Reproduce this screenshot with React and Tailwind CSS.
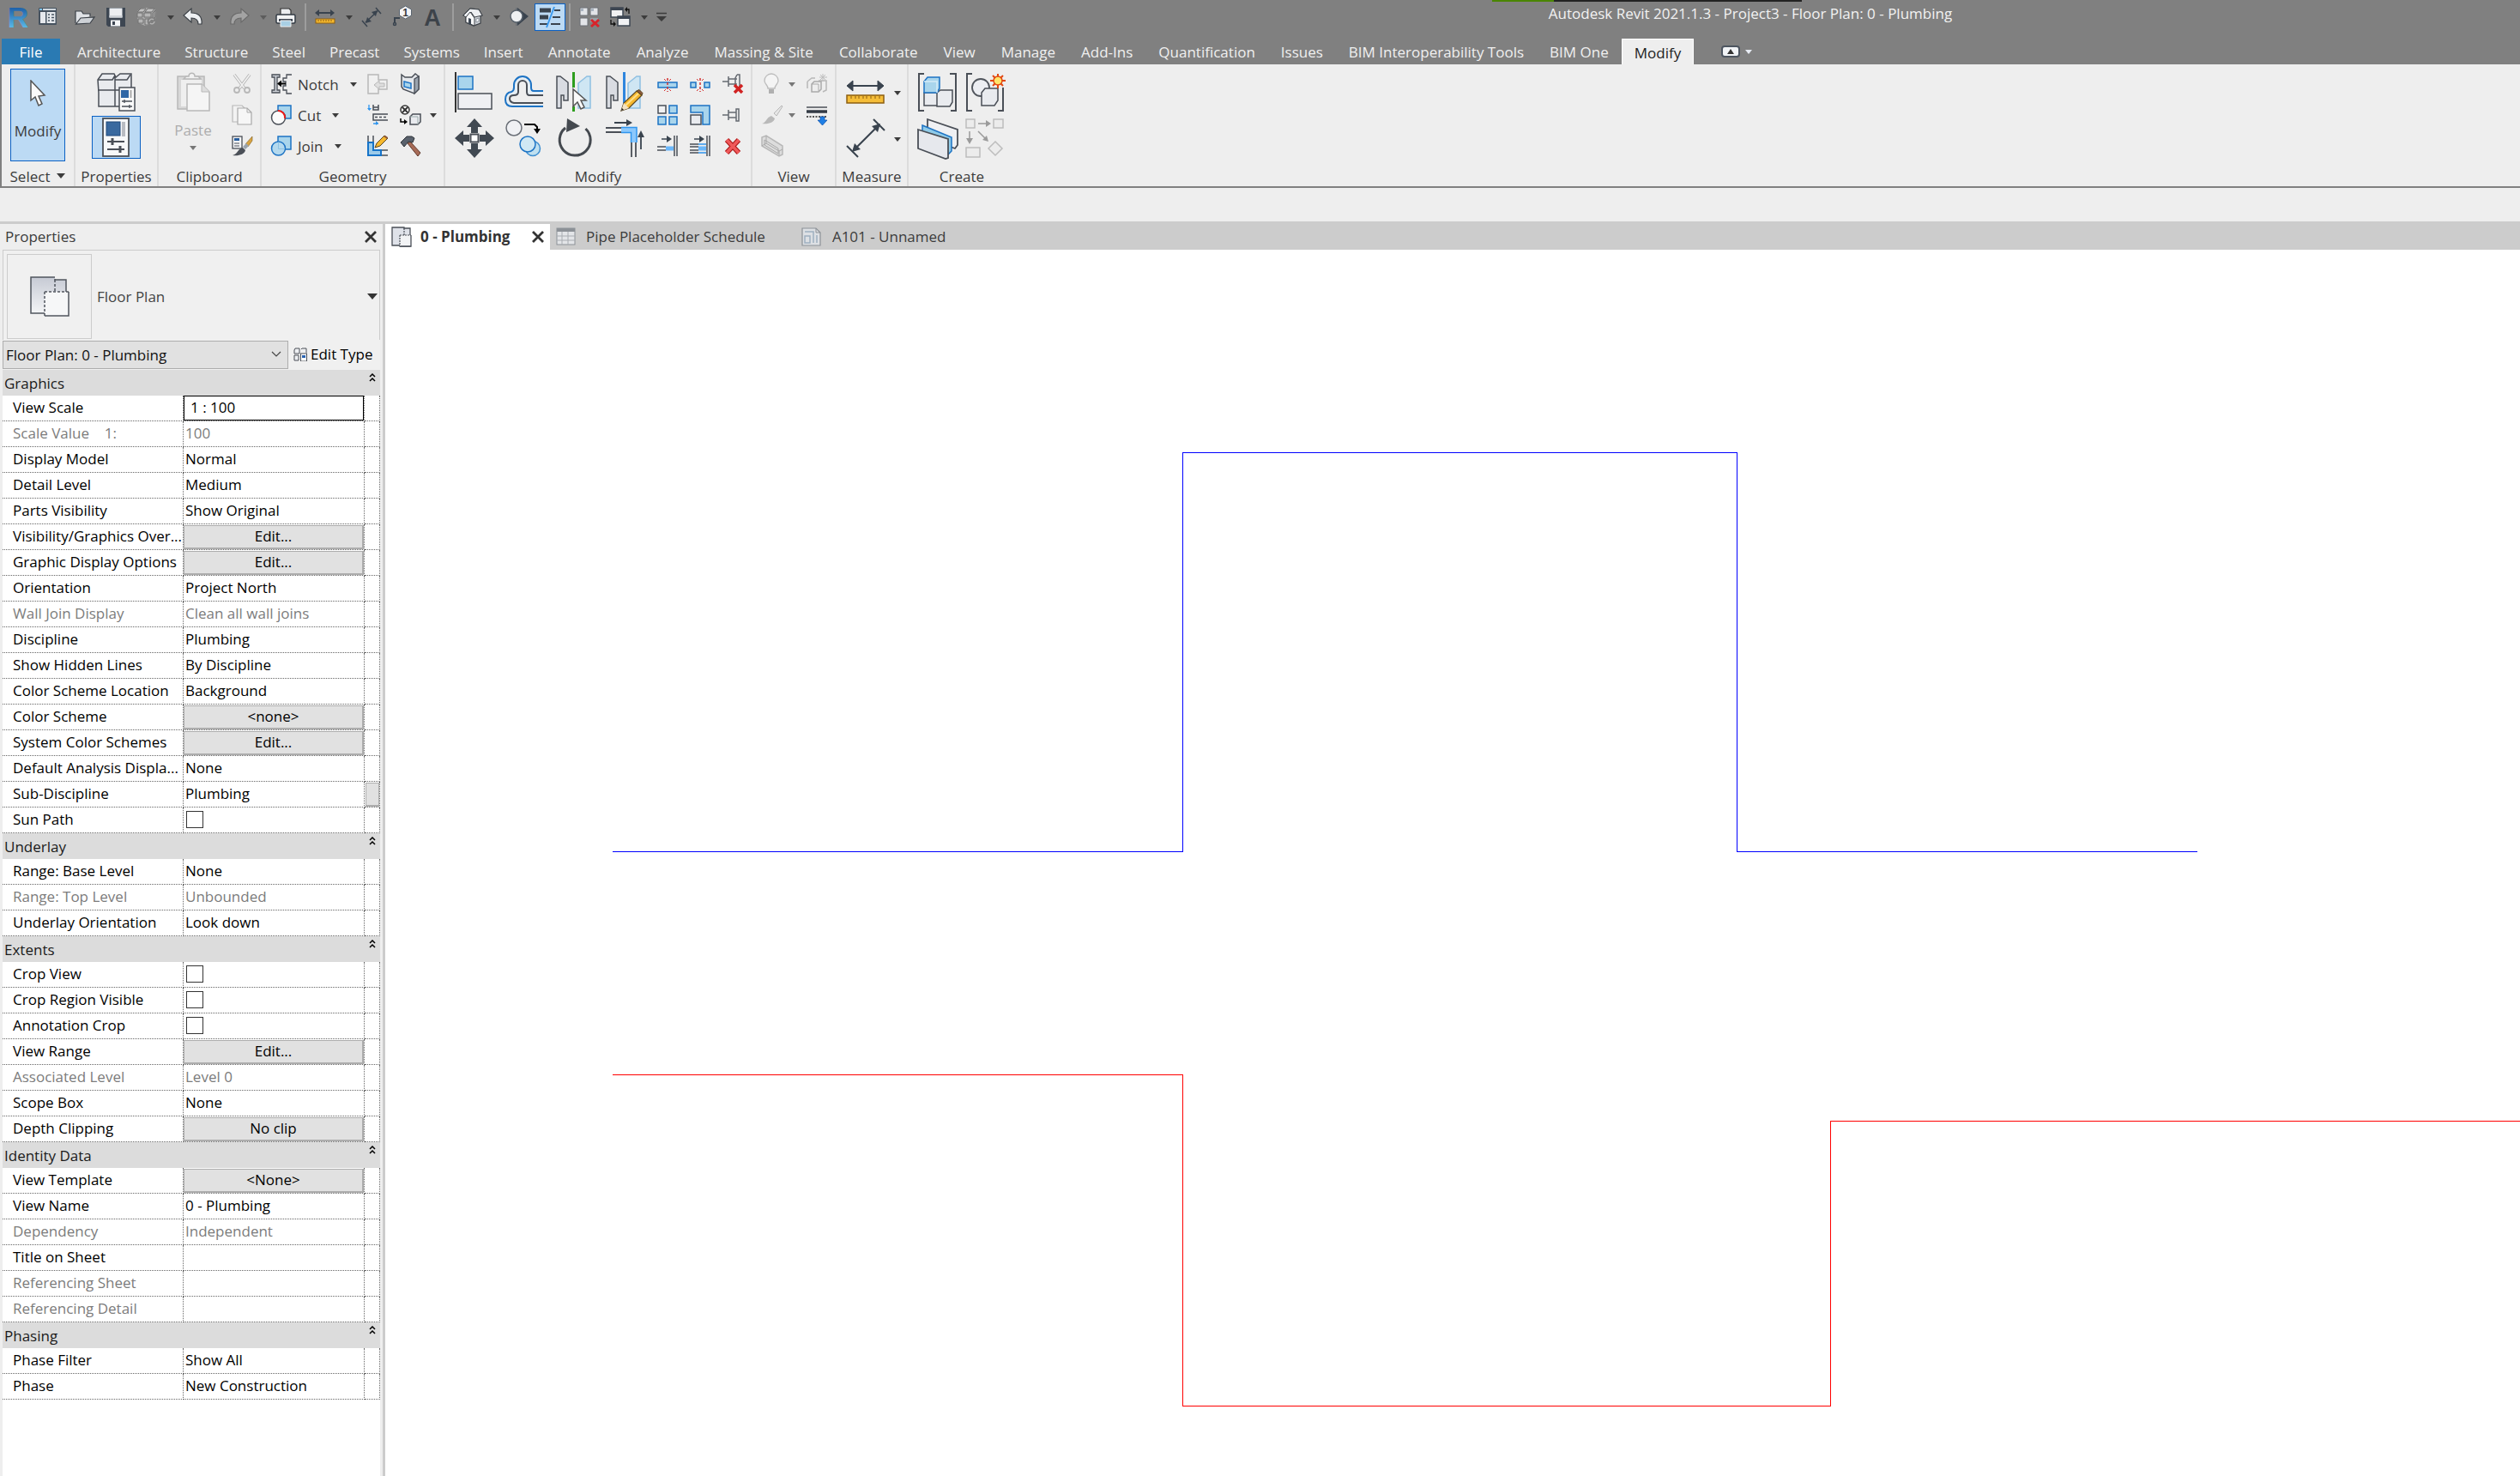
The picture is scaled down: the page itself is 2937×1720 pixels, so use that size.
import React, { useState } from 'react';

const DARK = '#4a4f57';
const BLUE = '#1d73c4';
const SKY = '#a9d5ec';
const PALE = '#e9ebef';
const MUTE = '#b8b8b8';

const S = ({ children, label }) => (
  <svg viewBox="0 0 24 24" className="block h-6 w-6 shrink-0 overflow-visible" fill="none" aria-label={label}>{children}</svg>
);

const L = ({ children }) => (
  <svg viewBox="0 0 48 48" className="block h-12 w-12 shrink-0" fill="none">{children}</svg>
);

const Caret = ({ color = '#3c3c3c' }) => (
  <svg viewBox="0 0 8 5" className="block h-[5px] w-2 shrink-0"><path d="M0 0h8L4 5z" fill={color} /></svg>
);

const Pencil = () => (
  <g>
    <path d="M20 45l3-9 15-14 6 5-15 15z" fill="#f5b82e" stroke="#5a4520" strokeWidth="1.2" />
    <path d="M38 22l3-1.5 4 4-1 2.500z" fill="#8f5a3c" stroke="#5a4520" />
    <path d="M25.500 38.500L40 25" stroke="#fde08a" strokeWidth="2" />
    <path d="M20 45l3-9 6 6z" fill="#f3e3c3" />
    <path d="M20 45l1-3 2 2z" fill="#222" />
  </g>
);

/* quick access icons */
const quick = {
  home: (
    <S>
      <rect x="0" y="1" width="21" height="20" rx="1" fill="#46525f" />
      <path d="M1 2h3v2H1z" fill="#7cc4ee" />
      <path d="M5 2h15v2H5z" fill="#cfd6dc" />
      <rect x="2" y="6" width="6" height="13" fill="#e6e9ed" />
      <rect x="9.500" y="6" width="10" height="13" fill="#e6e9ed" />
      <path d="M11 9h2m2 0h3m-7 3.500h2m2 0h3m-7 3.500h2m2 0h3" stroke="#46525f" strokeWidth="1.500" />
    </S>
  ),
  open: (
    <S>
      <path d="M1 19V5h7l2 3h8v3" fill="#dfe2e6" stroke="#3b4148" strokeWidth="1.200" />
      <path d="M1.500 20L7 13l16-1-5 7z" fill="#cdd1d6" stroke="#3b4148" strokeWidth="1.200" />
    </S>
  ),
  save: (
    <S>
      <path d="M1 1h22v22H3l-2-2z" fill="#3d4652" />
      <rect x="4.500" y="1.500" width="15" height="11" fill="#eceef1" />
      <path d="M4.500 10h15v2.500h-15z" fill="#cfd3d8" />
      <rect x="6" y="15.500" width="11" height="7" fill="#f4f5f7" />
      <rect x="8" y="17" width="3" height="4" fill="#3d4652" />
    </S>
  ),
  sync: (
    <S>
      <path d="M1 5l4-3 7-1 4 1h5l2 4-1 10-5 5-7 1-7-3-2-6z" fill="#a9a9a9" />
      <path d="M1 6l4-4h6L8 6zM10 6l3-4h8l-3 4z" fill="#c2c2c2" stroke="#707070" />
      <path d="M1 7h6v5H1zM9 7h8v5H9zM2 14h6v5H2zM10 14h7v7h-7z" fill="#b5b5b5" stroke="#707070" />
      <path d="M19 7l3-3v8l-3 3z" fill="#9c9c9c" stroke="#707070" />
      <circle cx="18" cy="17" r="5.500" fill="#808080" />
      <path d="M15 17a3 3 0 0 1 5-2m1 2a3 3 0 0 1-5 2" stroke="#b5b5b5" strokeWidth="1.300" />
    </S>
  ),
  undo: (
    <S>
      <path d="M1 10l9-8v5c8 0 13 4 12 13h-4c0-4-2-7-8-7v5z" fill="#eef0f2" stroke="#3c4147" strokeWidth="1.200" />
    </S>
  ),
  redo: (
    <S>
      <path d="M23 10l-9-8v5C6 7 1 11 2 20h4c0-4 2-7 8-7v5z" fill="#a3a3a3" stroke="#6a6a6a" strokeWidth="1.200" />
    </S>
  ),
  print: (
    <S>
      <path d="M6 2h10l2 2v6H6z" fill="#eceef0" stroke="#333" strokeWidth="1.200" />
      <rect x="1" y="9" width="22" height="10" rx="1.500" fill="#f3f4f5" stroke="#333b44" strokeWidth="1.500" />
      <path d="M4 14h16v3H4z" fill="#3d4652" />
      <path d="M6 16h12v7H6z" fill="#a8cfe4" stroke="#eee" />
    </S>
  ),
  measure: (
    <S>
      <path d="M2 7h19" stroke="#39434e" strokeWidth="2" />
      <path d="M0 7l5-4v8zM23 7l-5-4v8z" fill="#39434e" />
      <rect x="1" y="14" width="22" height="5" fill="#f5b92f" stroke="#8d5f10" />
      <path d="M4 15v2m3-2v2m3-2v2m3-2v2m3-2v2m3-2v2" stroke="#8d5f10" />
    </S>
  ),
  dimension: (
    <S>
      <path d="M1 16l6 7M17 1l6 7M5 18L19 5" stroke="#39434e" strokeWidth="1.500" />
      <path d="M5 19l2-7 5 5zM19 4l-7 2 5 5z" fill="#39434e" />
    </S>
  ),
  tag: (
    <S>
      <path d="M3 20v-7h6" stroke="#39434e" strokeWidth="2" />
      <circle cx="3" cy="20" r="1.500" fill="#808080" stroke="#39434e" strokeWidth="1.500" />
      <path d="M15.500 -1l7 4v7l-7 4-7-4v-7z" fill="#f4f5f7" stroke="#5b6570" />
      <text x="15.500" y="11" textAnchor="middle" fontSize="12" fontWeight="700" fill="#3b3b3b" fontFamily="Liberation Sans">1</text>
    </S>
  ),
  text: (
    <S>
      <text x="11" y="22" textAnchor="middle" fontSize="27" fontWeight="700" fill="#3d434a" fontFamily="Liberation Sans">A</text>
    </S>
  ),
  house: (
    <S>
      <path d="M1 10L9 2l10 1 4 7-2 1v8l-8 3-9-4v-7z" fill="#cfd3d9" stroke="#3c4147" strokeWidth="1.200" />
      <path d="M1 10L9 2l10 1 4 7-9 2-4-6-6 6z" fill="#eceef1" stroke="#3c4147" />
      <path d="M4 12l5-6 5 7v9l-10-4z" fill="#f8f9fa" stroke="#3c4147" />
      <path d="M7 13l3 1v7l-3-1z" fill="#3d4652" />
      <path d="M16 14l3-1v4l-3 1z" fill="#f4f6f8" stroke="#6b747e" strokeWidth=".7" />
    </S>
  ),
  section: (
    <S>
      <path d="M10 1l13 10-13 11z" fill="#39434e" />
      <circle cx="9" cy="11" r="7" fill="#eef0f2" stroke="#59626c" strokeWidth="1.500" />
      <path d="M9 4v-3m0 17v4" stroke="#59626c" />
    </S>
  ),
  thin: (
    <S>
      <path d="M0 4h13M0 12h10" stroke="#39434e" strokeWidth="5" />
      <path d="M0 20h9M17 4h7M15 12h9M13 20h11" stroke="#39434e" strokeWidth="2" />
      <path d="M17 0L8 24" stroke="#3a9af0" strokeWidth="2" />
    </S>
  ),
  closeViews: (
    <S>
      <path d="M1 1h9v9H1zM13 1h9v9h-9zM1 13h9v9H1z" fill="#e2e4e8" stroke="#6b6f75" />
      <path d="M2 2h3v3H2zM14 2h3v3h-3z" fill="#aab4c0" />
      <path d="M13 13h9v5h-9z" fill="#9aa0a6" />
      <path d="M14 15l9 8m0-8l-9 8" stroke="#d8232a" strokeWidth="3" />
    </S>
  ),
  switchViews: (
    <S>
      <rect x="1" y="1" width="14" height="11" fill="#f0f1f3" stroke="#3d4652" strokeWidth="1.500" />
      <path d="M1 2.500h14" stroke="#3d4652" strokeWidth="3" />
      <rect x="9" y="11" width="14" height="11" fill="#f0f1f3" stroke="#3d4652" strokeWidth="1.500" />
      <path d="M9 12.500h14" stroke="#3d4652" strokeWidth="3" />
      <path d="M18 3h4v5M1 15v5h5" stroke="#111" strokeWidth="1.300" />
      <path d="M20 0v6l-3-3zM4 17v6l3-3z" fill="#111" />
    </S>
  ),
};

/* small ribbon icons, 24px */
const Scissors = () => (
  <S>
    <path d="M3 1l12 16M21 1L9 17" stroke={MUTE} strokeWidth="3.500" />
    <path d="M3 1l12 16M21 1L9 17" stroke="#f4f4f4" strokeWidth="1.500" />
    <circle cx="6" cy="19" r="3" stroke={MUTE} strokeWidth="1.800" />
    <circle cx="18" cy="19" r="3" stroke={MUTE} strokeWidth="1.800" />
  </S>
);
const CopyClip = () => (
  <S>
    <path d="M1 1h11l3 3v16H1z" fill="#f2f2f2" stroke={MUTE} strokeWidth="1.200" />
    <path d="M7 4h11l5 5v14H7z" fill="#f6f6f6" stroke="#a8a8a8" strokeWidth="1.200" />
    <path d="M18 4v5h5" stroke="#a8a8a8" />
  </S>
);
const MatchType = () => (
  <S>
    <rect x="1" y="1" width="11" height="14" fill="#f4f5f7" stroke={DARK} strokeWidth="1.300" />
    <rect x="3" y="3" width="6" height="3" fill="#2a5f9e" />
    <path d="M3 9h6M3 12h6" stroke={DARK} />
    <path d="M24 1l-8 9 3 3 5-7z" fill="#d9a441" stroke="#7a5a20" strokeWidth=".6" />
    <path d="M17 9l3 3-4 4-3-3z" fill="#9aa3ad" />
    <path d="M1 23c6-1 6-8 12-9l3 3c-1 5-8 7-15 6z" fill="#4b5058" />
  </S>
);
const NotchIcon = () => (
  <S>
    <path d="M1 1h9v3H7v15h3v3H1v-3h3V4H1z" fill="#cfd3d9" stroke={DARK} strokeWidth="1.300" />
    <path d="M24 1h-6v4h-4v4h3v5h-3v5h4v4h6" stroke={DARK} strokeWidth="1.300" />
    <path d="M10 11.500h7" stroke="#000" strokeWidth="2" />
    <path d="M7 11.500l5-4v8z" fill="#000" />
  </S>
);
const CutIcon = () => (
  <S>
    <rect x="8" y="1" width="15" height="15" fill={SKY} stroke={BLUE} strokeWidth="1.500" />
    <circle cx="8.500" cy="15" r="8" fill="#fbfbfb" stroke={DARK} strokeWidth="1.500" />
    <path d="M8 7a8 8 0 0 1 8 9" stroke="#f01818" strokeWidth="2" />
  </S>
);
const JoinIcon = () => (
  <S>
    <rect x="8" y="1" width="15" height="15" fill={SKY} stroke={BLUE} strokeWidth="1.500" />
    <circle cx="8.500" cy="15" r="8" fill="#b4d9ee" stroke={BLUE} strokeWidth="1.500" />
    <path d="M8.500 7.500V15.500H16" stroke="#8fc3e4" />
  </S>
);
const Coping = () => (
  <S>
    <path d="M1 1h12v6h10v11H13v5H1z" fill="#f0f0f0" stroke={MUTE} strokeWidth="1.500" />
    <path d="M8 13l6-5v3h6v4h-6v3z" fill="#dedede" stroke={MUTE} />
  </S>
);
const BeamJoin = () => (
  <S>
    <path d="M2 0v6M7 22h6" stroke="#2f95ee" strokeWidth="1.300" />
    <path d="M0 4h5L2.500 7zM10 19v5l3-2.500z" fill="#2f95ee" />
    <path d="M7 0v6h6V0M7 3h6" stroke={DARK} strokeWidth="1.500" />
    <path d="M24 11H7v7h17" stroke={DARK} strokeWidth="1.500" />
    <path d="M9 14.500h15" stroke={DARK} strokeWidth="1.500" strokeDasharray="3 2" />
  </S>
);
const WallJoin = () => (
  <S>
    <path d="M1 0v23M7 0v8M24 17h-7M24 23H1" stroke={DARK} strokeWidth="1.500" />
    <path d="M1 8h6v9h9v6H1z" fill="#9ccbe9" stroke="#1673c8" strokeWidth="2" />
    <path d="M9 14l2-5 9-9 4 3-9 9z" fill="#f5b82e" stroke="#5a4520" />
    <path d="M19 1l2-1 3 2-1 2z" fill="#8f5a3c" />
  </S>
);
const SplitFace = () => (
  <S>
    <path d="M2 1l4 3h8l4-4 4 3v15l-5 5-13-5-2-3z" fill="#e5e8ec" stroke={DARK} strokeWidth="1.500" />
    <path d="M17 6l5-3v15l-5 5z" fill="#9aa3ae" stroke={DARK} strokeWidth="1.300" />
    <path d="M5 9l8 2v6l-8-2z" fill={SKY} stroke={BLUE} strokeWidth="1.500" />
  </S>
);
const Paint = () => (
  <S>
    <circle cx="6" cy="6" r="5" fill="#fff" stroke="#333" strokeWidth="1.500" />
    <path d="M3 3l6 6M9 3L3 9" stroke="#333" strokeWidth="2" />
    <path d="M1 16v4h5" stroke="#000" strokeWidth="1.500" />
    <path d="M5 17v6l4-3z" fill="#000" />
    <path d="M12 14l3-3h9v9l-3 3h-9z" fill={PALE} stroke={DARK} strokeWidth="1.500" />
    <path d="M12 14h9v9" stroke="#9aa" />
  </S>
);
const Hammer = () => (
  <S>
    <path d="M9 9l3-2 12 13-3 4z" fill="#a76b57" stroke="#61382b" />
    <path d="M1 8l7-7h6l3 2-2 5-5-1-5 6z" fill="#59616c" stroke="#2d3238" />
  </S>
);

const SplitEl = ({ gap }) => (
  <S>
    {gap ? (
      <>
        <rect x="1" y="10" width="6" height="6" fill={SKY} stroke={BLUE} strokeWidth="1.500" />
        <rect x="17" y="10" width="6" height="6" fill={SKY} stroke={BLUE} strokeWidth="1.500" />
      </>
    ) : (
      <rect x="1" y="10" width="22" height="6" fill={SKY} stroke={BLUE} strokeWidth="1.500" />
    )}
    <path d="M8 6l2 2m6-2l-2 2m-6 12l2-2m6 2l-2-2" stroke="#d23030" />
    <path d="M12 5v16" stroke="#d23030" strokeWidth="1.500" strokeDasharray="3 2" />
  </S>
);
const Unpin = ({ red }) => (
  <S>
    <path d="M0 9h7M7 3v12M7 6h10M7 12h10M17 1l-2 4v8l2 4M17 1h3v16h-3" stroke="#666b72" strokeWidth="1.500" />
    {red && <path d="M14 13l9 9m0-9l-9 9" stroke="#d12222" strokeWidth="3.500" />}
  </S>
);
const PinIcon = () => (
  <S>
    <path d="M0 12h7M7 6v12M7 9h9M7 15h9M19 5h-3v14h3z" stroke="#666b72" strokeWidth="1.500" />
  </S>
);
const ArrayIcon = () => (
  <S>
    <rect x="1" y="1" width="9" height="9" fill="#f1f2f4" stroke={DARK} strokeWidth="1.500" />
    <path d="M14 1h9v9h-9zM1 14h9v9H1zM14 14h9v9h-9z" fill={SKY} stroke={BLUE} strokeWidth="1.500" />
  </S>
);
const ScaleIcon = () => (
  <S>
    <path d="M1 1h22v22h-8V9H1z" fill={SKY} stroke={BLUE} strokeWidth="1.500" />
    <rect x="1" y="12" width="12" height="11" fill={PALE} stroke={DARK} strokeWidth="1.500" />
  </S>
);
const TrimOne = ({ multi }) => (
  <S>
    <path d="M20 0v24M23 0v24" stroke={DARK} strokeWidth="1.500" />
    <path d="M5 4h8" stroke="#39434e" strokeWidth="1.500" />
    <path d="M11 0l6 4-6 4z" fill="#39434e" />
    <path d="M0 13h10M0 17h10" stroke={DARK} strokeWidth="1.500" />
    <path d="M10 15h9" stroke="#6ab7fb" strokeWidth="5" />
    {multi && <path d="M0 10h10M0 20h10" stroke={DARK} strokeWidth="1.500" />}
    {multi && <path d="M10 10h9m-9 10h9" stroke="#2f95ee" strokeWidth="1.500" />}
  </S>
);
const Delete = () => (
  <S>
    <path d="M5 5l14 15M19 5L5 20" stroke="#b01c1c" strokeWidth="6" />
    <path d="M5 5l14 15M19 5L5 20" stroke="#f0595a" strokeWidth="3.500" />
  </S>
);

const Bulb = () => (
  <S>
    <path d="M7 17c0-4-4-5-4-9a8 8 0 0 1 16 0c0 4-4 5-4 9z" fill="#f4f4f4" stroke="#bcbcbc" strokeWidth="1.300" />
    <path d="M8 18h6v5H8z" fill="#b0b0b0" />
  </S>
);
const Displace = () => (
  <S>
    <path d="M1 9l5-4h4M1 9v8M14 8h9v11l-4 2" stroke={MUTE} strokeWidth="1.500" />
    <path d="M6 12l3-3h8v9l-3 3H6z" fill="#eee" stroke="#aaa" strokeWidth="1.500" />
    <path d="M6 12h8v8" stroke="#aaa" />
    <path d="M19 0v9M15 4h9M16 1l6 6m0-6l-6 6" stroke="#bdbdbd" />
  </S>
);
const Brush = () => (
  <S>
    <path d="M23 1l-9 9 3 3 7-11z" fill="#e6e6e6" stroke={MUTE} />
    <path d="M0 22c5-1 5-7 11-9l4 3c-1 5-8 7-15 6z" fill="#b9b9b9" />
  </S>
);
const LineWork = () => (
  <S>
    <path d="M0 3h24" stroke={DARK} strokeWidth="1.500" />
    <path d="M0 8h24" stroke="#333a44" strokeWidth="3.500" />
    <path d="M0 14h24" stroke="#222" strokeWidth="1.500" strokeDasharray="2 1.500" />
    <path d="M16 14h5v4h3l-5.500 6-5.500-6h3z" fill="#1f7fe6" stroke="#0d4fa6" strokeWidth=".7" />
  </S>
);
const SectionBox = () => (
  <S>
    <path d="M0 2l5-2 19 12v10l-4 2L0 12z" fill="#ddd" stroke={MUTE} strokeWidth="1.500" />
    <path d="M5 0v9l15 9v5M0 12l5-3M20 18l4-2M3 5l16 10v6L3 11z" stroke="#a9a9a9" />
  </S>
);

/* large ribbon icons, 48px */
const Align = () => (
  <L>
    <path d="M1 0v47" stroke="#333" strokeWidth="2" />
    <rect x="4" y="5" width="17" height="15" fill={SKY} stroke={BLUE} strokeWidth="1.500" />
    <rect x="4" y="25" width="39" height="18" fill="#eff0f3" stroke={DARK} strokeWidth="1.500" />
  </L>
);
const Offset = () => (
  <L>
    <path d="M45 22H34Q31 22 31 18V15A10 10 0 0 0 11 15V18Q11 22 8 23Q1 24 1 32T9 40H45" stroke={BLUE} strokeWidth="2" fill="#e6eef4" />
    <path d="M45 27H29Q26 27 26 23V15A5 5 0 0 0 16 15V23Q16 27 11 27Q6 27 6 31T11 36H45" stroke={DARK} strokeWidth="2" fill="#eee" />
  </L>
);
const MirrorShapes = () => (
  <>
    <path d="M3 5h4l9 7v21h-5v-6H8v15H3z" fill="#d9dce2" stroke={DARK} strokeWidth="1.500" />
    <path d="M42 5h-4l-10 8v29h14z" fill="#cfe6f3" stroke="#8fc0e2" strokeWidth="1.500" />
  </>
);
const MirrorPick = () => (
  <L>
    <MirrorShapes />
    <path d="M22.500 0v18m0 22v6" stroke="#2e9e1e" strokeWidth="3" />
    <path d="M22 20v20l5-5 4 8 4-2-4-8h6z" fill="#fafafa" stroke="#555" strokeWidth="1.500" />
  </L>
);
const MirrorDraw = () => (
  <L>
    <MirrorShapes />
    <path d="M23.500 0v44" stroke="#2f86de" strokeWidth="3" />
    <Pencil />
  </L>
);
const Move = () => (
  <L>
    <path d="M23 0l9 10h-5v7h-8v-7h-5zM23 46l9-10h-5v-7h-8v7h-5zM0 23l10-9v5h7v8h-7v5zM46 23l-10-9v5h-7v8h7v5z" fill="#414952" />
    <rect x="18.500" y="18.500" width="9" height="9" fill="#fff" stroke={DARK} strokeWidth="2" />
  </L>
);
const CopyBig = () => (
  <L>
    <circle cx="11" cy="11" r="9" fill="#f0f1f4" stroke="#6a6f77" strokeWidth="1.500" />
    <path d="M23 7h12l3 3v5" stroke="#000" strokeWidth="2" />
    <path d="M34 12h8l-4 6z" fill="#000" />
    <circle cx="33" cy="35" r="8.500" fill="#bfe0f0" stroke="#3f8fd0" strokeWidth="1.500" />
    <circle cx="27" cy="30" r="9" fill="#cfe8f4" stroke={BLUE} strokeWidth="1.500" />
  </L>
);
const Rotate = () => (
  <L>
    <path d="M13 11a18 18 0 1 0 23.500 1" stroke="#44494f" strokeWidth="3" />
    <path d="M15 0l15 9-16 7z" fill="#44494f" />
  </L>
);
const Trim = () => (
  <L>
    <path d="M2 11h19M2 16h19M32 28v17M37 28v17" stroke={DARK} strokeWidth="1.800" />
    <path d="M20 13.500h14.500V28" stroke="#8cc8fc" strokeWidth="7" />
    <path d="M20 10.500h18V28M20 16.500h11.500V28" stroke="#2f95ee" strokeWidth="1.500" />
    <path d="M12 5h16M43 36V20" stroke="#39434e" strokeWidth="1.800" />
    <path d="M26 1l7 4-7 4zM39 22l4-8 4 8z" fill="#39434e" />
  </L>
);
const MeasureBig = () => (
  <L>
    <path d="M3 16h39" stroke="#39434e" strokeWidth="2" />
    <path d="M1 16l7-6v12zM44 16l-7-6v12z" fill="#39434e" stroke="#39434e" />
    <rect x="1" y="27" width="43" height="9" fill="#f5bd38" stroke="#8d5f10" strokeWidth="1.500" />
    <path d="M6 28v3m5-3v3m4-3v3m5-3v3m4-3v3m5-3v3m5-3v3m5-3v3" stroke="#8d5f10" />
  </L>
);
const DimBig = () => (
  <L>
    <path d="M1 32l13 13M32 1l13 13M9 37L38 8" stroke="#39434e" strokeWidth="2" />
    <path d="M7 39l3-10 7 7zM40 6l-10 3 7 7z" fill="#39434e" />
  </L>
);
const Cubes = () => (
  <L>
    <path d="M8 2H2v43h6M38 2h7v43h-6" stroke={DARK} strokeWidth="2" />
    <path d="M8 24h15v15H8zM23 24l4-3h14v14l-3 5H23z" fill={PALE} stroke={DARK} strokeWidth="1.500" />
    <path d="M8 11l4-5h14v13l-3 5H8z" fill={SKY} stroke={BLUE} strokeWidth="1.500" />
    <path d="M8 11h15v13" stroke="#d5ecf7" strokeWidth="1.500" />
  </L>
);
const GroupBig = () => (
  <L>
    <path d="M8 2H2v43h6M44 18v27h-6" stroke={DARK} strokeWidth="2" />
    <circle cx="18" cy="18" r="10" fill="#eceef2" stroke="#50555c" strokeWidth="1.800" />
    <path d="M19 24l4-5h15v14l-4 6H19z" fill={PALE} stroke={DARK} strokeWidth="1.500" />
    <path d="M38 2v17M29 10h18M32 4l12 12m0-12L32 16" stroke="#e2470f" strokeWidth="2" />
    <circle cx="38" cy="10" r="5" fill="#ffe46a" stroke="#e2470f" strokeWidth="1.500" />
  </L>
);
const Assembly = () => (
  <L>
    <path d="M12 1l35 12v18l-3 4-32-12z" fill="#eff0f3" stroke={DARK} strokeWidth="1.800" />
    <path d="M6 8l34 14v16l-4 4L6 28z" fill="#8fcbe9" stroke={BLUE} strokeWidth="1.500" />
    <path d="M1 13l35 11v22l-3 1L1 35z" fill="#e6e8ed" stroke={DARK} strokeWidth="1.800" />
  </L>
);
const Similar = () => (
  <L>
    <path d="M1 1h10v10H1zM33 1h11v10H33zM1 34h16v11H1zM35 27l8 8-8 8-8-8z" fill="#ececec" stroke="#bdbdbd" strokeWidth="1.500" />
    <path d="M15 6h13M5 15v11M15 15l9 9" stroke="#9b9b9b" strokeWidth="1.500" />
    <path d="M24 2l6 4-6 4zM1 23h8l-4 7zM27 27l-7-2 5-5z" fill="#9b9b9b" />
  </L>
);
const TypeProps = () => (
  <L>
    <path d="M1 9l5-7h14l2 4 5-4h13v17l-5 4v12l-5 5H2V24z" fill="#e9ebef" stroke={DARK} strokeWidth="1.500" />
    <path d="M1 21h34M21 6v34M1 9h17l3-5M21 9h14l4-6" stroke={DARK} strokeWidth="1.500" />
    <rect x="26" y="18" width="18" height="27" fill="#fafafa" stroke={DARK} strokeWidth="1.500" />
    <rect x="28" y="21" width="9" height="9" fill="#2f66a5" />
    <path d="M39.500 21v9" stroke="#aaa" strokeWidth="2" />
    <path d="M29 34h12M29 40h12M32 32v4M38 38v4" stroke={DARK} strokeWidth="1.300" />
  </L>
);
const Props = () => (
  <L>
    <rect x="9" y="2" width="30" height="44" fill="#f7f8f9" stroke={DARK} strokeWidth="1.800" />
    <rect x="13" y="6" width="16" height="16" fill="#39699f" stroke="#214b7d" />
    <path d="M33 6v17" stroke="#b9bcc2" strokeWidth="4" />
    <path d="M14 29h20M14 38h20" stroke={DARK} strokeWidth="2" />
    <path d="M20 25v8M29 34v8" stroke={DARK} strokeWidth="3" />
  </L>
);
const PasteBig = () => (
  <svg viewBox="0 0 40 48" className="block h-12 w-10" fill="none">
    <path d="M2 5h31v38H2z" fill="#d8d8d8" stroke={MUTE} strokeWidth="1.500" />
    <path d="M6 9h24v31H6z" fill="#efefef" />
    <path d="M9 8l3-3h3c0-5 7-5 7 0h4l3 3z" fill="#f2f2f2" stroke={MUTE} strokeWidth="1.500" />
    <path d="M13 14h17l9 9v22H13z" fill="#f5f5f5" stroke={MUTE} strokeWidth="1.500" />
    <path d="M30 14v9h9" fill="#ddd" stroke={MUTE} />
  </svg>
);

const PlanIcon = () => (
  <svg viewBox="0 0 24 24" className="mr-2.5 h-6 w-6" fill="none">
    <path d="M1 1h14v1h7v21H10v-1H1z" fill="#dfe2e9" stroke={DARK} strokeWidth="1.300" />
    <path d="M10 22V10h13v13H10z" fill="#f2f3f5" />
    <path d="M15 2v8m-5 0h13M10 10v12" stroke={DARK} strokeWidth="1.200" strokeDasharray="2 1" />
    <path d="M23 10v13H10" stroke={DARK} strokeWidth="1.300" />
  </svg>
);

const PlanBig = () => (
  <L>
    <defs>
      <linearGradient id="plan" x1="0" y1="0" x2="0" y2="1">
        <stop offset="0" stopColor="#c6cad4" />
        <stop offset="1" stopColor="#f7f8f9" />
      </linearGradient>
    </defs>
    <path d="M2 1h28v3h13v42H18v-3H2z" fill="url(#plan)" />
    <path d="M30 3v1h13v14M18 43H2V1h28" stroke="#50555d" strokeWidth="1.500" />
    <path d="M18 18h28v28H18z" fill="#f6f7f8" />
    <path d="M30 4v14M18 18h28M18 18v28" stroke="#50555d" strokeWidth="1.500" strokeDasharray="3 2" />
    <path d="M46 18v28H18" stroke="#50555d" strokeWidth="1.500" />
  </L>
);

const Cross = () => (
  <svg viewBox="0 0 14 14" className="h-[14px] w-[14px]"><path d="M1 1l12 12M13 1L1 13" stroke="#333" strokeWidth="2.800" /></svg>
);

const Sep = () => <div className="-mx-0.5 h-8 w-0.5 bg-[#9d9d9d]" />;

const Q = ({ icon, label, className = '' }) => (
  <button aria-label={label} className={`shrink-0 ${className}`}>{icon}</button>
);

const QCaret = ({ color }) => (
  <button aria-label="More" className="w-1.5 shrink-0"><Caret color={color} /></button>
);

const coreTabs = ['Architecture', 'Structure', 'Steel', 'Precast', 'Systems', 'Insert'];

const moreTabs = [
  'Annotate', 'Analyze', 'Massing & Site', 'Collaborate', 'View', 'Manage', 'Add-Ins',
  'Quantification', 'Issues', 'BIM Interoperability Tools', 'BIM One',
];

const TitleBar = () => (
  <header className="relative flex h-[45px] items-start bg-[#808080]">
    <div className="flex h-10 items-center gap-3 pl-[9px]">
      <button aria-label="Revit" className="shrink-0">
        <svg viewBox="0 0 24 30" className="h-[30px] w-6 overflow-visible">
          <defs>
            <linearGradient id="logo" x1="0" y1="0" x2="0" y2="1">
              <stop offset="0.2" stopColor="#1d5fa8" />
              <stop offset="0.9" stopColor="#62c3ee" />
            </linearGradient>
          </defs>
          <text x="12" y="27" textAnchor="middle" fontSize="34" fontWeight="700" fill="url(#logo)" fontFamily="Liberation Sans">R</text>
        </svg>
      </button>
      <Q icon={quick.home} label="Home" className="mr-1.5" />
      <Q icon={quick.open} label="Open" />
      <Q icon={quick.save} label="Save" />
      <Q icon={quick.sync} label="Synchronize" />
      <QCaret />
      <Q icon={quick.undo} label="Undo" />
      <QCaret />
      <Q icon={quick.redo} label="Redo" />
      <QCaret color="#5c5c5c" />
      <Q icon={quick.print} label="Print" />
      <Sep />
      <Q icon={quick.measure} label="Measure" />
      <QCaret />
      <Q icon={quick.dimension} label="Aligned dimension" />
      <Q icon={quick.tag} label="Tag by category" />
      <Q icon={quick.text} label="Text" />
      <Sep />
      <Q icon={quick.house} label="Default 3D view" />
      <QCaret />
      <Q icon={quick.section} label="Section" />
      <Q icon={quick.thin} label="Thin lines" className="-mx-1.5 border border-[#0b61c4] bg-[#bcdaf4] px-[5px] py-[3px]" />
      <Sep />
      <Q icon={quick.closeViews} label="Close inactive views" />
      <Q icon={quick.switchViews} label="Switch windows" />
      <QCaret />
      <button aria-label="Customize toolbar">
        <svg viewBox="0 0 12 12" className="h-3 w-3"><path d="M0 1.500h12" stroke="#3c3c3c" strokeWidth="1.500" /><path d="M0 5h12l-6 6z" fill="#3c3c3c" /></svg>
      </button>
    </div>
    <h1 className="flex-1 pl-[366px] text-center text-[17px] leading-8 text-[#f2f2f2]">
      Autodesk Revit 2021.1.3 - Project3 - Floor Plan: 0 - Plumbing
    </h1>
    <div className="absolute top-0 left-[1739px] flex h-0.5">
      <div className="w-[72px] bg-[#4a8500]" />
      <div className="w-[289px] bg-[#222]" />
    </div>
  </header>
);

const MenuTabs = () => (
  <nav className="flex h-[30px] items-stretch bg-[#808080] pl-0.5 text-[17px] leading-8 whitespace-nowrap text-[#f0f0f0]">
    <button className="mr-1.5 w-[68px] bg-[#2a7ab3] text-white">File</button>
    {coreTabs.map(tab => (
      <button key={tab} className="px-[14px]">{tab}</button>
    ))}
    {moreTabs.map(tab => (
      <button key={tab} className="px-[15px]">{tab}</button>
    ))}
    <button className="border border-b-0 border-white bg-[#eee] px-[14px] text-[#222]">Modify</button>
    <button aria-label="Minimize ribbon" className="ml-8 flex items-center gap-1.5">
      <svg viewBox="0 0 22 14" className="h-[14px] w-[22px]">
        <rect x="1" y="1" width="20" height="12" rx="3" fill="#f1f3f6" stroke="#4d5560" strokeWidth="2" />
        <path d="M7 10l4-6 4 6z" fill="#333" />
      </svg>
      <Caret color="#e8ecf4" />
    </button>
  </nav>
);

const Panel = ({ title, children, className = '', last, caret }) => (
  <section className={`flex flex-col ${last ? '' : 'border-r-2 border-[#dcdcdc]'}`}>
    <div className={`flex h-[117px] items-start ${className}`}>{children}</div>
    <h2 className="flex h-[25px] items-center justify-center gap-2 text-[17px] leading-6 text-[#3c3c3c]">
      <span className="pt-0.5">{title}</span>
      {caret && <svg viewBox="0 0 10 6" className="h-1.5 w-2.5"><path d="M0 0h10L5 6z" fill="#3c3c3c" /></svg>}
    </h2>
  </section>
);

const Col = ({ children, className = '' }) => (
  <div className={`flex flex-col gap-3 pt-[11px] ${className}`}>
    {React.Children.map(children, child => <button className="flex items-center">{child}</button>)}
  </div>
);

const BigCol = ({ children }) => (
  <div className="flex flex-col gap-1.5 pt-[9px]">
    {React.Children.map(children, child => <button className="block">{child}</button>)}
  </div>
);

const TextTool = ({ icon, children }) => (
  <button className="flex h-6 items-center gap-[7px]">
    {icon}
    <span className="mr-1.5 pt-0.5">{children}</span>
    <Caret />
  </button>
);

const Ribbon = () => (
  <div className="flex border-b-2 border-l-2 border-[#808080] bg-[#eee] text-[17px] text-[#3c3c3c]">
    <Panel title="Select" caret className="px-2.5">
      <button className="mt-[5px] flex h-[108px] w-16 flex-col items-center border border-[#0b61c4] bg-[#bcdaf4] pt-3">
        <svg viewBox="0 0 20 32" className="h-8 w-5">
          <path d="M2 1v23l5-4 4 10 4-2-4-9 7-1z" fill="#fafafa" stroke="#555" strokeWidth="1.500" />
        </svg>
        <span className="mt-4 leading-6">Modify</span>
      </button>
    </Panel>
    <Panel title="Properties" className="flex-col px-[19px]">
      <button aria-label="Type properties" className="mt-[9px] ml-1.5"><TypeProps /></button>
      <button aria-label="Properties" className="mt-[3px] w-[57px] border border-[#0b61c4] bg-[#bcdaf4] px-[3px]"><Props /></button>
    </Panel>
    <Panel title="Clipboard" className="gap-[25px] pr-[9px] pl-5">
      <button className="flex w-10 flex-col items-center pt-[9px] text-[#adadad]">
        <PasteBig />
        <span className="mt-2 mb-1.5 leading-6">Paste</span>
        <Caret color="#777" />
      </button>
      <Col><Scissors /><CopyClip /><MatchType /></Col>
    </Panel>
    <Panel title="Geometry" className="gap-[14px] pr-2 pl-[11px]">
      <div className="flex w-[98px] flex-col gap-3 pt-[11px] leading-6">
        <TextTool icon={<NotchIcon />}>Notch</TextTool>
        <TextTool icon={<CutIcon />}>Cut</TextTool>
        <TextTool icon={<JoinIcon />}>Join</TextTool>
      </div>
      <Col><Coping /><BeamJoin /><WallJoin /></Col>
      <Col className="w-[43px]">
        <SplitFace />
        <span className="flex items-center gap-[11px]"><Paint /><Caret /></span>
        <Hammer />
      </Col>
    </Panel>
    <Panel title="Modify" className="gap-[14px] pr-[9px] pl-[11px]">
      <div className="flex gap-2.5">
        <BigCol><Align /><Move /></BigCol>
        <BigCol><Offset /><CopyBig /></BigCol>
        <BigCol><MirrorPick /><Rotate /></BigCol>
        <BigCol><MirrorDraw /><Trim /></BigCol>
      </div>
      <Col><SplitEl /><ArrayIcon /><TrimOne /></Col>
      <Col><SplitEl gap /><ScaleIcon /><TrimOne multi /></Col>
      <Col><Unpin red /><PinIcon /><Delete /></Col>
    </Panel>
    <Panel title="View" className="gap-[13px] pr-[9px] pl-[11px]">
      <Col>
        <span className="flex items-center gap-[7px]"><Bulb /><Caret color="#777" /></span>
        <span className="flex items-center gap-[7px]"><Brush /><Caret color="#777" /></span>
        <SectionBox />
      </Col>
      <Col><Displace /><LineWork /></Col>
    </Panel>
    <Panel title="Measure" className="pr-[7px] pl-[11px]">
      <BigCol>
        <span className="flex items-center gap-2"><MeasureBig /><Caret /></span>
        <span className="flex items-center gap-2"><DimBig /><Caret /></span>
      </BigCol>
    </Panel>
    <Panel title="Create" className="gap-2 px-2.5" last>
      <BigCol><Cubes /><Assembly /></BigCol>
      <BigCol><GroupBig /><Similar /></BigCol>
    </Panel>
  </div>
);

const groups = [
  {
    title: 'Graphics',
    rows: [
      { name: 'View Scale', value: '1 : 100', type: 'input' },
      { name: 'Scale Value    1:', value: '100', off: true },
      { name: 'Display Model', value: 'Normal' },
      { name: 'Detail Level', value: 'Medium' },
      { name: 'Parts Visibility', value: 'Show Original' },
      { name: 'Visibility/Graphics Over...', value: 'Edit...', type: 'button' },
      { name: 'Graphic Display Options', value: 'Edit...', type: 'button' },
      { name: 'Orientation', value: 'Project North' },
      { name: 'Wall Join Display', value: 'Clean all wall joins', off: true },
      { name: 'Discipline', value: 'Plumbing' },
      { name: 'Show Hidden Lines', value: 'By Discipline' },
      { name: 'Color Scheme Location', value: 'Background' },
      { name: 'Color Scheme', value: '<none>', type: 'button' },
      { name: 'System Color Schemes', value: 'Edit...', type: 'button' },
      { name: 'Default Analysis Displa...', value: 'None' },
      { name: 'Sub-Discipline', value: 'Plumbing', extra: true },
      { name: 'Sun Path', type: 'check' },
    ],
  },
  {
    title: 'Underlay',
    rows: [
      { name: 'Range: Base Level', value: 'None' },
      { name: 'Range: Top Level', value: 'Unbounded', off: true },
      { name: 'Underlay Orientation', value: 'Look down' },
    ],
  },
  {
    title: 'Extents',
    rows: [
      { name: 'Crop View', type: 'check' },
      { name: 'Crop Region Visible', type: 'check' },
      { name: 'Annotation Crop', type: 'check' },
      { name: 'View Range', value: 'Edit...', type: 'button' },
      { name: 'Associated Level', value: 'Level 0', off: true },
      { name: 'Scope Box', value: 'None' },
      { name: 'Depth Clipping', value: 'No clip', type: 'button' },
    ],
  },
  {
    title: 'Identity Data',
    rows: [
      { name: 'View Template', value: '<None>', type: 'button' },
      { name: 'View Name', value: '0 - Plumbing' },
      { name: 'Dependency', value: 'Independent', off: true },
      { name: 'Title on Sheet', value: '' },
      { name: 'Referencing Sheet', value: '', off: true },
      { name: 'Referencing Detail', value: '', off: true },
    ],
  },
  {
    title: 'Phasing',
    rows: [
      { name: 'Phase Filter', value: 'Show All' },
      { name: 'Phase', value: 'New Construction' },
    ],
  },
];

const Value = ({ row, id }) => {
  if (row.type === 'input') {
    return <input id={id} defaultValue={row.value} className="block h-[29px] w-full border border-black bg-white px-[7px] pb-0.5 outline-none" />;
  }
  if (row.type === 'button') {
    return (
      <button id={id} className="block h-7 w-full border border-r-2 border-b-2 border-[#adadad] bg-[#e1e1e1] leading-6">
        {row.value}
      </button>
    );
  }
  if (row.type === 'check') {
    return <input id={id} type="checkbox" className="mb-0.5 ml-[3px] block h-5 w-5 appearance-none border border-[#333] bg-white checked:bg-[#333]" />;
  }
  return <span id={id} className="block h-[29px] pl-0.5 leading-[27px]">{row.value}</span>;
};

const Group = ({ group }) => {
  const [open, setOpen] = useState(true);

  return (
    <tbody>
      <tr>
        <th colSpan={3} className="h-[30px] bg-[#dcdcdc] p-0 text-left font-normal text-[#1a1a1a]">
          <div className="flex h-[30px] items-start justify-between pr-[5px] pl-0.5">
            <span className="leading-8">{group.title}</span>
            <button aria-label={`Toggle ${group.title}`} onClick={() => setOpen(!open)} className="pt-1">
              <svg viewBox="0 0 8 10" className="block h-2.5 w-2" fill="none">
                <path d="M1 4l3-3 3 3M1 9l3-3 3 3" stroke="#000" strokeWidth="1.500" />
              </svg>
            </button>
          </div>
        </th>
      </tr>
      {open && group.rows.map(row => {
        const id = row.name.toLowerCase().replace(/[^a-z]+/g, '-');
        return (
          <tr key={row.name} className={row.off ? 'text-[#7c7c7c]' : 'text-black'}>
            <td className="h-[30px] border-r border-b border-dotted border-[#666] p-0 pl-3">
              <label htmlFor={id} className="block h-[29px] leading-[27px] whitespace-pre">{row.name}</label>
            </td>
            <td className="h-[30px] border-r border-b border-dotted border-[#666] p-0">
              <Value row={row} id={id} />
            </td>
            <td className="h-[30px] border-r border-b border-dotted border-[#666] p-0">
              {row.extra && <button aria-label="Associate parameter" className="ml-px block h-7 w-4 border border-b-2 border-[#adadad] bg-[#e1e1e1]" />}
            </td>
          </tr>
        );
      })}
    </tbody>
  );
};

const PropertiesPalette = () => (
  <aside className="flex w-[449px] shrink-0 flex-col border-r-[3px] border-[#ccc] bg-[#eee] px-[3px] text-[17px]">
    <div className="flex h-[30px] items-center justify-between pr-1 pl-[3px] text-[#3c3c3c]">
      <h2 className="leading-8">Properties</h2>
      <button aria-label="Close properties"><Cross /></button>
    </div>
    <button className="flex h-[105px] items-center border border-b-0 border-[#ccc] bg-[#f0f0f0] pt-[3px] pr-0.5 pl-1 text-[#444]">
      <span className="flex h-[99px] w-[99px] items-center justify-center border border-[#ccc]">
        <PlanBig />
      </span>
      <span className="ml-1.5 flex-1 text-left">Floor Plan</span>
      <svg viewBox="0 0 12 7" className="h-[7px] w-3"><path d="M0 0h12L6 7z" fill="#333" /></svg>
    </button>
    <div className="flex h-[35px] items-center bg-[#f0f0f0] text-black">
      <div className="relative">
        <select aria-label="Instance" className="block h-[33px] w-[333px] appearance-none border border-[#adadad] bg-[#e1e1e1] pl-[3px] text-[#111]">
          <option>Floor Plan: 0 - Plumbing</option>
        </select>
        <svg viewBox="0 0 12 7" className="pointer-events-none absolute top-3 right-2 h-[7px] w-3" fill="none">
          <path d="M1 1l5 5 5-5" stroke="#444" strokeWidth="1.200" />
        </svg>
      </div>
      <button className="ml-1.5 flex items-center gap-1 pb-0.5 whitespace-nowrap">
        <svg viewBox="0 0 16 16" className="h-4 w-4" fill="none">
          <path d="M1 3l1-2h5v6H1zM9 2l1-1h5v5M1 9h5v6H1z" fill="#eef0f3" stroke={DARK} />
          <rect x="8.500" y="7" width="7" height="9" fill="#fff" stroke={DARK} />
          <rect x="10" y="9" width="4" height="3" fill="#2a63b0" />
        </svg>
        Edit Type
      </button>
    </div>
    <div className="flex-1 bg-white">
      <table className="w-full table-fixed border-separate border-spacing-0">
        <colgroup>
          <col className="w-[211px]" />
          <col className="w-[211px]" />
          <col />
        </colgroup>
        {groups.map(group => <Group key={group.title} group={group} />)}
      </table>
    </div>
  </aside>
);

const ViewTabs = () => (
  <div className="flex h-[30px] items-stretch bg-[#ccc] text-[17px] leading-8 whitespace-nowrap text-[#3c3c3c]">
    <div className="flex w-48 items-center bg-white pl-[7px]">
      <PlanIcon />
      <button className="flex-1 text-left font-bold text-[#333]">0 - Plumbing</button>
      <button aria-label="Close view" className="mr-[7px]"><Cross /></button>
    </div>
    <button className="flex items-center gap-3 pl-1.5">
      <S>
        <rect x="2" y="2" width="21" height="19" fill="#e3e5e8" stroke="#8c9197" />
        <path d="M2 2h21v4H2z" fill="#8c9197" />
        <path d="M2 11h21M2 16h21M8 6v15M15 6v15" stroke="#a9adb2" />
      </S>
      Pipe Placeholder Schedule
    </button>
    <button className="ml-[42px] flex items-center gap-3">
      <S>
        <path d="M1 2h16l5 5v15H1z" fill="#dde0e4" stroke="#8c9197" strokeWidth="1.200" />
        <path d="M17 2v5h5" stroke="#8c9197" />
        <path d="M4 6h10v13M4 19v-8h6v8zM18 10v9" stroke="#9fb0c0" strokeWidth="1.500" />
      </S>
      A101 - Unnamed
    </button>
  </div>
);

const Canvas = () => (
  <svg className="w-full flex-1 bg-white" fill="none" shapeRendering="crispEdges">
    <path d="M265 701.500H929.500V236.500H1575.500V701.500H2112" stroke="#0000ff" />
    <path d="M265 961.500H929.500V1347.500H1684.500V1015.500H6000" stroke="#ff0000" />
  </svg>
);

const App = () => (
  <div className="flex min-h-screen flex-col overflow-hidden bg-[#eee] font-['Open_Sans','Noto_Sans',sans-serif]">
    <TitleBar />
    <MenuTabs />
    <Ribbon />
    <div className="h-[42px] border-b-[3px] border-[#ccc] bg-[#eee]" />
    <div className="flex flex-1">
      <PropertiesPalette />
      <main className="flex min-w-0 flex-1 flex-col">
        <ViewTabs />
        <Canvas />
      </main>
    </div>
  </div>
);

export default App;
